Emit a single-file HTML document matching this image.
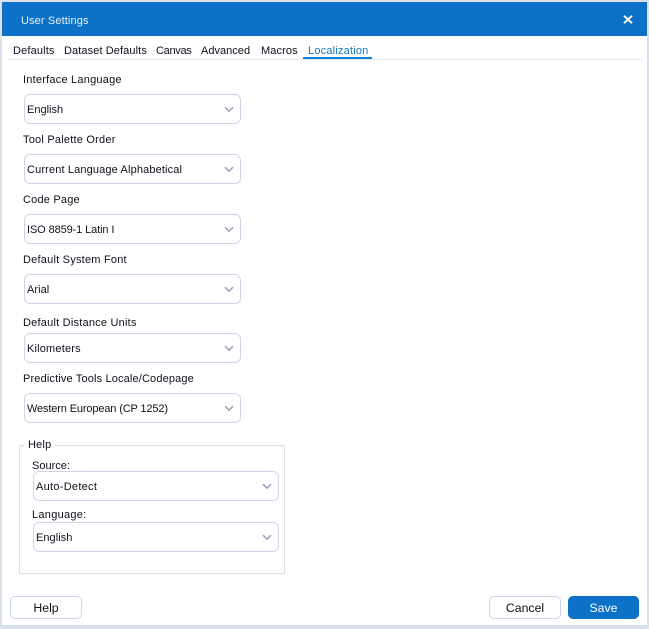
<!DOCTYPE html>
<html><head><meta charset="utf-8"><style>
html,body{margin:0;padding:0;background:#fff;width:649px;height:629px;overflow:hidden}
body{position:relative;font-family:"Liberation Sans",sans-serif;font-size:11px;color:#10101c}
div{position:absolute;box-sizing:border-box}
.t{white-space:nowrap;line-height:14px;height:14px;letter-spacing:.17px}
.s{background:#fff;border:1px solid #ccd5e8;border-radius:6px;height:30px}
.s svg{position:absolute;top:11px;right:6px}
.b{height:23px;border:1px solid #ccd5e8;border-radius:5px;text-align:center;line-height:22px;font-size:12.3px;background:#fff}
</style></head><body>
<div style="left:0;top:0;width:649px;height:629px;border:2px solid #dbe1ec;border-bottom-width:4px"></div>
<div style="left:2px;top:2px;width:645px;height:34px;background:#0c71c7"></div>
<div class="t" style="left:21px;top:14px;color:#e8f1fa;letter-spacing:.12px">User Settings</div>
<svg style="position:absolute;left:623px;top:15px" width="10" height="9" viewBox="0 0 10 9"><path d="M1 .8L9 8.2M9 .8L1 8.2" stroke="#fff" stroke-width="2" fill="none"/></svg>

<div style="left:8px;top:59px;width:634px;height:1px;background:#e3e7ee"></div>
<div style="left:303px;top:57px;width:69px;height:2px;background:#0c84d6"></div>
<div class="t" style="left:13px;top:44px;letter-spacing:.15px">Defaults</div>
<div class="t" style="left:64px;top:44px;letter-spacing:.1px">Dataset Defaults</div>
<div class="t" style="left:156px;top:44px;letter-spacing:-.3px">Canvas</div>
<div class="t" style="left:201px;top:44px;letter-spacing:.02px">Advanced</div>
<div class="t" style="left:261px;top:44px;letter-spacing:.12px">Macros</div>
<div class="t" style="left:308px;top:44px;color:#1576c4;letter-spacing:.2px">Localization</div>

<div class="t" style="left:23px;top:73px;letter-spacing:.22px">Interface Language</div>
<div class="s" style="left:24px;top:94px;width:217px"><svg width="10" height="7" viewBox="0 0 10 7"><path d="M1 1.2L5 5.2L9 1.2" stroke="#97a3b9" stroke-width="1.5" fill="none"/></svg></div>
<div class="t" style="left:27px;top:103px;letter-spacing:0">English</div>

<div class="t" style="left:23px;top:133px;letter-spacing:.22px">Tool Palette Order</div>
<div class="s" style="left:24px;top:154px;width:217px"><svg width="10" height="7" viewBox="0 0 10 7"><path d="M1 1.2L5 5.2L9 1.2" stroke="#97a3b9" stroke-width="1.5" fill="none"/></svg></div>
<div class="t" style="left:27px;top:163px;letter-spacing:.14px">Current Language Alphabetical</div>

<div class="t" style="left:23px;top:193px;letter-spacing:.2px">Code Page</div>
<div class="s" style="left:24px;top:214px;width:217px"><svg width="10" height="7" viewBox="0 0 10 7"><path d="M1 1.2L5 5.2L9 1.2" stroke="#97a3b9" stroke-width="1.5" fill="none"/></svg></div>
<div class="t" style="left:27px;top:223px;letter-spacing:-.11px">ISO 8859-1 Latin I</div>

<div class="t" style="left:23px;top:253px;letter-spacing:.22px">Default System Font</div>
<div class="s" style="left:24px;top:274px;width:217px"><svg width="10" height="7" viewBox="0 0 10 7"><path d="M1 1.2L5 5.2L9 1.2" stroke="#97a3b9" stroke-width="1.5" fill="none"/></svg></div>
<div class="t" style="left:27px;top:283px;letter-spacing:.05px">Arial</div>

<div class="t" style="left:23px;top:316px;letter-spacing:.22px">Default Distance Units</div>
<div class="s" style="left:24px;top:333px;width:217px"><svg width="10" height="7" viewBox="0 0 10 7"><path d="M1 1.2L5 5.2L9 1.2" stroke="#97a3b9" stroke-width="1.5" fill="none"/></svg></div>
<div class="t" style="left:27px;top:342px;letter-spacing:.18px">Kilometers</div>

<div class="t" style="left:23px;top:372px;letter-spacing:.15px">Predictive Tools Locale/Codepage</div>
<div class="s" style="left:24px;top:393px;width:217px"><svg width="10" height="7" viewBox="0 0 10 7"><path d="M1 1.2L5 5.2L9 1.2" stroke="#97a3b9" stroke-width="1.5" fill="none"/></svg></div>
<div class="t" style="left:27px;top:402px;letter-spacing:-.14px">Western European (CP 1252)</div>

<div style="left:19px;top:445px;width:266px;height:129px;border:1px solid #dcdfe6"></div>
<div class="t" style="left:24px;top:438px;background:#fff;padding:0 4px;letter-spacing:.2px">Help</div>
<div class="t" style="left:32px;top:459px;letter-spacing:0">Source:</div>
<div class="s" style="left:33px;top:471px;width:246px"><svg width="10" height="7" viewBox="0 0 10 7"><path d="M1 1.2L5 5.2L9 1.2" stroke="#97a3b9" stroke-width="1.5" fill="none"/></svg></div>
<div class="t" style="left:36px;top:480px;letter-spacing:.28px">Auto-Detect</div>
<div class="t" style="left:32px;top:508px;letter-spacing:.28px">Language:</div>
<div class="s" style="left:33px;top:522px;width:246px"><svg width="10" height="7" viewBox="0 0 10 7"><path d="M1 1.2L5 5.2L9 1.2" stroke="#97a3b9" stroke-width="1.5" fill="none"/></svg></div>
<div class="t" style="left:36px;top:531px;letter-spacing:.05px">English</div>

<div class="b" style="left:10px;top:596px;width:72px">Help</div>
<div class="b" style="left:489px;top:596px;width:72px">Cancel</div>
<div class="b" style="left:568px;top:596px;width:71px;background:#0c71c7;border-color:#0c71c7;color:#fff">Save</div>
</body></html>
